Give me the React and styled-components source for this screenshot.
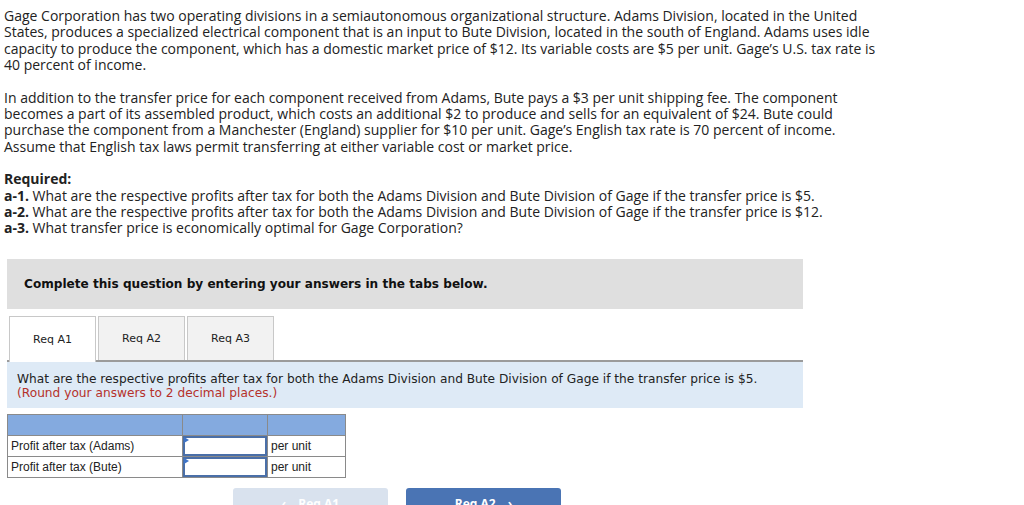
import React from "react";
import styled, { createGlobalStyle } from "styled-components";

const Global = createGlobalStyle`
  body {
    margin: 0;
    padding: 8px 4px 0 4px;
    background: #fff;
    overflow: hidden;
  }
`;

const Page = styled.div`
  width: 1016px;
`;

const Para = styled.p`
  margin: 0 0 16px 0;
  font-family: "Open Sans", "Liberation Sans", sans-serif;
  font-size: 14px;
  line-height: 16.4px;
  color: #222;
  white-space: nowrap;
`;

const Strong = styled.b`
  font-weight: 700;
`;

const Prompt = styled.div`
  margin: 22px 0 0 3px;
  width: 796px;
  height: 50px;
  background: #dfdfdf;
  display: flex;
  align-items: center;
  padding-left: 17px;
  box-sizing: border-box;
  font-family: "DejaVu Sans", Verdana, sans-serif;
  font-size: 12.1px;
  font-weight: 700;
  color: #111;
`;

const TabRow = styled.div`
  margin: 8px 0 0 3px;
  width: 796px;
  display: flex;
  align-items: flex-end;
  border-bottom: 2px solid #9b9b9b;
  box-sizing: border-box;
  height: 45px;
`;

const Tab = styled.div`
  width: 87px;
  height: 44px;
  margin-left: 2px;
  box-sizing: border-box;
  border: 1px solid #c8c8c8;
  border-bottom: none;
  background: ${(p) => (p.$active ? "#fff" : "#f2f2f2")};
  display: flex;
  align-items: center;
  justify-content: center;
  font-family: "DejaVu Sans", Verdana, sans-serif;
  font-size: 11px;
  color: #222;
  ${(p) => p.$active && "margin-bottom: -2px; height: 46px;"}
`;

const Question = styled.div`
  margin-left: 3px;
  width: 796px;
  box-sizing: border-box;
  background: #deeaf6;
  padding: 10px 10px 7px 10px;
  font-family: "DejaVu Sans", Verdana, sans-serif;
  font-size: 12.2px;
  line-height: 14.5px;
  color: #222;
`;

const Hint = styled.div`
  color: #b5312b;
`;

const Table = styled.table`
  margin: 6px 0 0 3px;
  border-collapse: collapse;
  font-family: "Liberation Sans", Arial, sans-serif;
  font-size: 12px;
  color: #222;
`;

const HeadCell = styled.td`
  background: #84aadf;
  border: 1px solid #8a8a8a;
  height: 20px;
  padding: 0;
  width: ${(p) => p.$w}px;
`;

const Cell = styled.td`
  border: 1px solid #8a8a8a;
  height: 20px;
  padding: 0 3px;
`;

const InputCell = styled.td`
  border: 1px solid #8a8a8a;
  padding: 0;
  height: 20px;
  position: relative;
`;

const Input = styled.div`
  height: 20px;
  box-sizing: border-box;
  border: 2px solid #4a6fa8;
  background: #fff;
`;

const Flag = styled.span`
  position: absolute;
  left: 1px;
  top: 1px;
  width: 0;
  height: 0;
  border-top: 3px solid transparent;
  border-bottom: 3px solid transparent;
  border-left: 5px solid #3f74c7;
`;

const Nav = styled.div`
  display: flex;
  gap: 18px;
  margin: 10px 0 0 229px;
`;

const NavButton = styled.div`
  width: 155px;
  height: 40px;
  border-radius: 3px 3px 0 0;
  background: ${(p) => (p.$primary ? "#4a74b4" : "#d9e2ee")};
  color: #fff;
  display: flex;
  justify-content: center;
  padding-top: 7px;
  box-sizing: border-box;
  font-family: "Open Sans", "Liberation Sans", sans-serif;
  font-weight: 700;
  font-size: 12px;
  gap: 12px;
`;

export default function App() {
  return (
    <Page>
      <Global />
      <Para>
        Gage Corporation has two operating divisions in a semiautonomous organizational structure. Adams Division, located in the United
        <br />
        States, produces a specialized electrical component that is an input to Bute Division, located in the south of England. Adams uses idle
        <br />
        capacity to produce the component, which has a domestic market price of $12. Its variable costs are $5 per unit. Gage’s U.S. tax rate is
        <br />
        40 percent of income.
      </Para>
      <Para>
        In addition to the transfer price for each component received from Adams, Bute pays a $3 per unit shipping fee. The component
        <br />
        becomes a part of its assembled product, which costs an additional $2 to produce and sells for an equivalent of $24. Bute could
        <br />
        purchase the component from a Manchester (England) supplier for $10 per unit. Gage’s English tax rate is 70 percent of income.
        <br />
        Assume that English tax laws permit transferring at either variable cost or market price.
      </Para>
      <Para style={{ marginBottom: 0 }}>
        <Strong>Required:</Strong>
        <br />
        <Strong>a-1.</Strong> What are the respective profits after tax for both the Adams Division and Bute Division of Gage if the transfer price is $5.
        <br />
        <Strong>a-2.</Strong> What are the respective profits after tax for both the Adams Division and Bute Division of Gage if the transfer price is $12.
        <br />
        <Strong>a-3.</Strong> What transfer price is economically optimal for Gage Corporation?
      </Para>
      <Prompt>Complete this question by entering your answers in the tabs below.</Prompt>
      <TabRow>
        <Tab $active>Req A1</Tab>
        <Tab>Req A2</Tab>
        <Tab>Req A3</Tab>
      </TabRow>
      <Question>
        What are the respective profits after tax for both the Adams Division and Bute Division of Gage if the transfer price is $5.
        <Hint>(Round your answers to 2 decimal places.)</Hint>
      </Question>
      <Table>
        <tbody>
          <tr>
            <HeadCell $w={174} />
            <HeadCell $w={84} />
            <HeadCell $w={77} />
          </tr>
          <tr>
            <Cell>Profit after tax (Adams)</Cell>
            <InputCell>
              <Input />
              <Flag />
            </InputCell>
            <Cell>per unit</Cell>
          </tr>
          <tr>
            <Cell>Profit after tax (Bute)</Cell>
            <InputCell>
              <Input />
              <Flag />
            </InputCell>
            <Cell>per unit</Cell>
          </tr>
        </tbody>
      </Table>
      <Nav>
        <NavButton>
          <span>‹</span>
          <span>Req A1</span>
        </NavButton>
        <NavButton $primary>
          <span>Req A2</span>
          <span>›</span>
        </NavButton>
      </Nav>
    </Page>
  );
}
